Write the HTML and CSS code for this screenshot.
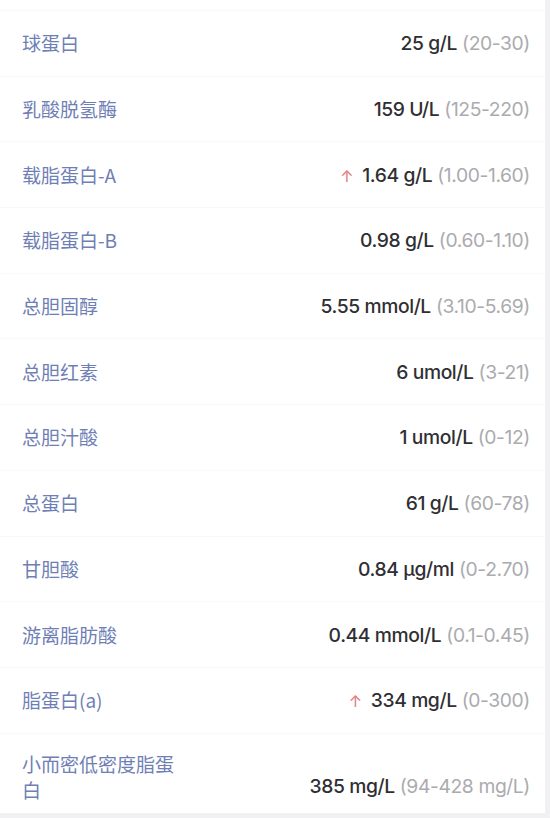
FILE: index.html
```html
<!DOCTYPE html>
<html lang="zh-CN">
<head>
<meta charset="utf-8">
<link rel="stylesheet" href="styles.css">
</head>
<body>
<div class="card">
  <div class="row"><div class="label">球蛋白</div><div class="val"><b>25 g/L</b> <span class="range">(20-30)</span></div></div>
  <div class="row"><div class="label">乳酸脱氢酶</div><div class="val"><b>159 U/L</b> <span class="range">(125-220)</span></div></div>
  <div class="row"><div class="label">载脂蛋白-A</div><div class="val"><span class="up">↑</span><b>1.64 g/L</b> <span class="range">(1.00-1.60)</span></div></div>
  <div class="row"><div class="label">载脂蛋白-B</div><div class="val"><b>0.98 g/L</b> <span class="range">(0.60-1.10)</span></div></div>
  <div class="row"><div class="label">总胆固醇</div><div class="val"><b>5.55 mmol/L</b> <span class="range">(3.10-5.69)</span></div></div>
  <div class="row"><div class="label">总胆红素</div><div class="val"><b>6 umol/L</b> <span class="range">(3-21)</span></div></div>
  <div class="row"><div class="label">总胆汁酸</div><div class="val"><b>1 umol/L</b> <span class="range">(0-12)</span></div></div>
  <div class="row"><div class="label">总蛋白</div><div class="val"><b>61 g/L</b> <span class="range">(60-78)</span></div></div>
  <div class="row"><div class="label">甘胆酸</div><div class="val"><b>0.84 μg/ml</b> <span class="range">(0-2.70)</span></div></div>
  <div class="row"><div class="label">游离脂肪酸</div><div class="val"><b>0.44 mmol/L</b> <span class="range">(0.1-0.45)</span></div></div>
  <div class="row"><div class="label">脂蛋白(a)</div><div class="val"><span class="up">↑</span><b>334 mg/L</b> <span class="range">(0-300)</span></div></div>
  <div class="row tall"><div class="label">小而密低密度脂蛋白</div><div class="val"><b>385 mg/L</b> <span class="range">(94-428 mg/L)</span></div></div>
</div>
</body>
</html>
```
FILE: styles.css
```css
html, body {
  margin: 0;
  padding: 0;
}
body {
  background: #f1f1f3;
  width: 550px;
  height: 818px;
  overflow: hidden;
  font-family: Inter, "Noto Sans CJK SC", sans-serif;
}
.card {
  width: 545px;
  background: #ffffff;
  padding-top: 10px;
  box-sizing: border-box;
}
.row {
  display: flex;
  align-items: center;
  justify-content: space-between;
  height: 65.7px;
  box-sizing: border-box;
  padding: 0 15px 0 22px;
  border-top: 1px solid #f9f9fa;
}
.row.tall {
  height: 80px;
  padding-top: 8px;
}
.row.tall .val {
  padding-top: 18px;
}
.label {
  width: 160px;
  color: #6f7fb6;
  font-family: "Noto Sans CJK SC", sans-serif;
  font-size: 19px;
  line-height: 26px;
}
.val {
  font-size: 19.3px;
  color: #2f2f33;
  white-space: nowrap;
  letter-spacing: -0.4px;
}
.val b {
  font-weight: 500;
}
.range {
  color: #ababaf;
  font-weight: 400;
}
.up {
  color: #e07a7a;
  font-size: 16px;
  margin-right: 9px;
}
```
